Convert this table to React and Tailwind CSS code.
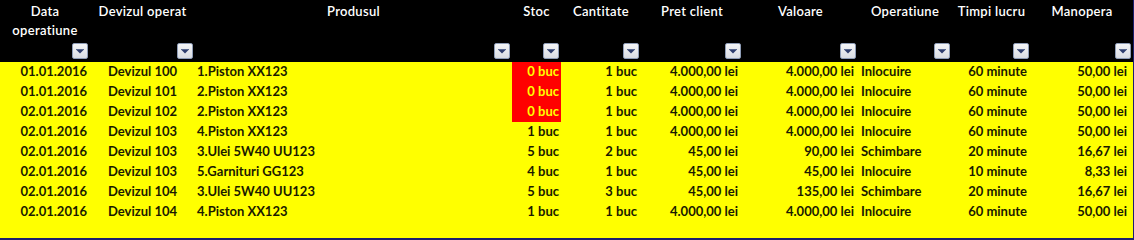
import React from "react";

const cols = [
  { title: ["Data", "operatiune"], w: "w-[90px]", cell: "justify-end pr-[3px]" },
  { title: ["Devizul operat"], w: "w-[105px]", cell: "justify-center" },
  { title: ["Produsul"], w: "w-[317px]", cell: "justify-start pl-[2px]" },
  { title: ["Stoc"], w: "w-[49px]", cell: "justify-end pr-[2px]" },
  { title: ["Cantitate"], w: "w-[80px]", cell: "justify-end pr-[4px]" },
  { title: ["Pret client"], w: "w-[102px]", cell: "justify-end pr-[5px]" },
  { title: ["Valoare"], w: "w-[115px]", cell: "justify-end pr-[4px]" },
  { title: ["Operatiune"], w: "w-[94px]", cell: "justify-start pl-[3px]" },
  { title: ["Timpi lucru"], w: "w-[79px]", cell: "justify-end pr-[4px]" },
  { title: ["Manopera"], w: "w-[102px]", cell: "justify-end pr-[6px]" },
];

const rows = [
  ["01.01.2016", "Devizul 100", "1.Piston XX123", "0 buc", "1 buc", "4.000,00 lei", "4.000,00 lei", "Inlocuire", "60 minute", "50,00 lei"],
  ["01.01.2016", "Devizul 101", "2.Piston XX123", "0 buc", "1 buc", "4.000,00 lei", "4.000,00 lei", "Inlocuire", "60 minute", "50,00 lei"],
  ["02.01.2016", "Devizul 102", "2.Piston XX123", "0 buc", "1 buc", "4.000,00 lei", "4.000,00 lei", "Inlocuire", "60 minute", "50,00 lei"],
  ["02.01.2016", "Devizul 103", "4.Piston XX123", "1 buc", "1 buc", "4.000,00 lei", "4.000,00 lei", "Inlocuire", "60 minute", "50,00 lei"],
  ["02.01.2016", "Devizul 103", "3.Ulei 5W40 UU123", "5 buc", "2 buc", "45,00 lei", "90,00 lei", "Schimbare", "20 minute", "16,67 lei"],
  ["02.01.2016", "Devizul 103", "5.Garnituri GG123", "4 buc", "1 buc", "45,00 lei", "45,00 lei", "Inlocuire", "10 minute", "8,33 lei"],
  ["02.01.2016", "Devizul 104", "3.Ulei 5W40 UU123", "5 buc", "3 buc", "45,00 lei", "135,00 lei", "Schimbare", "20 minute", "16,67 lei"],
  ["02.01.2016", "Devizul 104", "4.Piston XX123", "1 buc", "1 buc", "4.000,00 lei", "4.000,00 lei", "Inlocuire", "60 minute", "50,00 lei"],
];

function FilterButton() {
  return (
    <div className="w-[16px] h-[16px] rounded-[2px] border border-[#8e9cb6] bg-gradient-to-b from-[#f4f5f7] to-[#d9dce2] flex items-center justify-center">
      <svg width="8" height="5" viewBox="0 0 8 5">
        <rect x="0" y="0" width="8" height="1" fill="#5a6a92" />
        <path d="M0.5 1 L7.5 1 L4 4.5 Z" fill="#2f3e6e" />
      </svg>
    </div>
  );
}

export default function App() {
  return (
    <div
      className="w-[1134px] h-[240px] bg-[#ffff00] border-r border-b-2 border-[#1c1f6e] overflow-hidden text-[13px]"
      style={{ fontFamily: "Lato, 'Liberation Sans', sans-serif" }}
    >
      {/* header */}
      <div className="flex h-[62px] bg-black text-white">
        {cols.map((c, i) => (
          <div key={i} className={`${c.w} flex flex-col justify-between items-stretch`}>
            <div className="pt-[2px] text-center leading-[19px] font-semibold tracking-[0.3px]">
              {c.title.map((t) => (
                <div key={t}>{t}</div>
              ))}
            </div>
            <div className="flex justify-end pr-[2px] pb-[3px]">
              <FilterButton />
            </div>
          </div>
        ))}
      </div>

      {/* data rows */}
      {rows.map((r, ri) => (
        <div key={ri} className="flex h-[20px] font-bold text-[#1a1a00]">
          {r.map((v, ci) => {
            const zero = ci === 3 && v === "0 buc";
            return (
              <div
                key={ci}
                className={`${cols[ci].w} ${cols[ci].cell} flex items-center whitespace-nowrap ${
                  zero ? "bg-[#ff0000] text-[#ffff00]" : ""
                }`}
              >
                {v}
              </div>
            );
          })}
        </div>
      ))}
    </div>
  );
}
